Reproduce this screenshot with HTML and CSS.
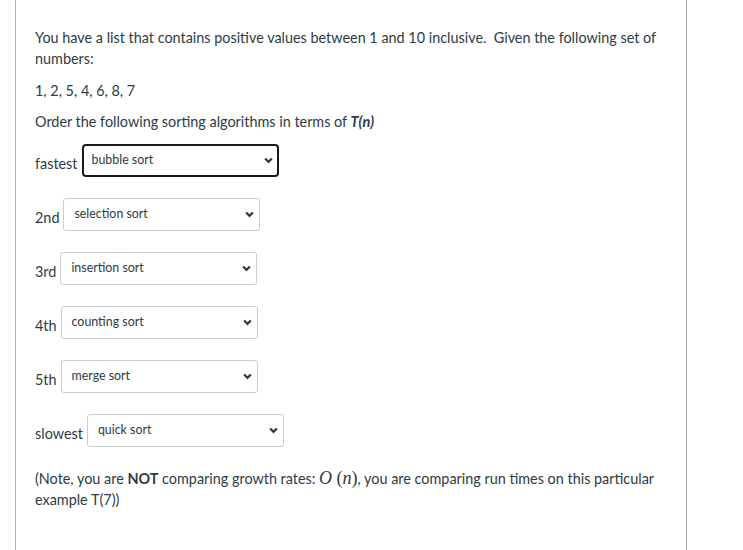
FILE: index.html
```html
<!DOCTYPE html>
<html lang="en">
<head>
  <meta charset="UTF-8">
  <title>Question - Sorting Algorithms</title>
  <link rel="stylesheet" href="styles.css">
</head>
<body>

  <div class="question">
    <p>You have a list that contains positive values between 1 and 10 inclusive.&nbsp; Given the following set of numbers:</p>
    <p>1, 2, 5, 4, 6, 8, 7</p>
    <p>Order the following sorting algorithms in terms of <strong><em>T(n)</em></strong></p>

    <div class="answers">
      <div class="answer-row">
        <span class="rank">fastest</span>
        <span class="select-wrap">
          <select class="answer focused">
            <option>bubble sort</option>
          </select>
          <svg class="chevron" viewBox="0 0 8 6"><path d="M1 1.2 L4 4.2 L7 1.2" /></svg>
        </span>
      </div>

      <div class="answer-row">
        <span class="rank">2nd</span>
        <span class="select-wrap">
          <select class="answer">
            <option>selection sort</option>
          </select>
          <svg class="chevron" viewBox="0 0 8 6"><path d="M1 1.2 L4 4.2 L7 1.2" /></svg>
        </span>
      </div>

      <div class="answer-row">
        <span class="rank">3rd</span>
        <span class="select-wrap">
          <select class="answer">
            <option>insertion sort</option>
          </select>
          <svg class="chevron" viewBox="0 0 8 6"><path d="M1 1.2 L4 4.2 L7 1.2" /></svg>
        </span>
      </div>

      <div class="answer-row">
        <span class="rank">4th</span>
        <span class="select-wrap">
          <select class="answer">
            <option>counting sort</option>
          </select>
          <svg class="chevron" viewBox="0 0 8 6"><path d="M1 1.2 L4 4.2 L7 1.2" /></svg>
        </span>
      </div>

      <div class="answer-row">
        <span class="rank">5th</span>
        <span class="select-wrap">
          <select class="answer">
            <option>merge sort</option>
          </select>
          <svg class="chevron" viewBox="0 0 8 6"><path d="M1 1.2 L4 4.2 L7 1.2" /></svg>
        </span>
      </div>

      <div class="answer-row">
        <span class="rank">slowest</span>
        <span class="select-wrap">
          <select class="answer">
            <option>quick sort</option>
          </select>
          <svg class="chevron" viewBox="0 0 8 6"><path d="M1 1.2 L4 4.2 L7 1.2" /></svg>
        </span>
      </div>
    </div>

    <p class="note">(Note, you are <strong>NOT</strong> comparing growth rates: <span class="math"><i>O</i> (<i>n</i>)</span>, you are comparing run times on this particular example T(7))</p>
  </div>

</body>
</html>
```

FILE: styles.css
```css
* {
  margin: 0;
  padding: 0;
  box-sizing: border-box;
}

body {
  background-color: #ffffff;
  font-family: Lato, "Open Sans", sans-serif;
  font-size: 14.4px;
  line-height: 21px;
  color: #2d3b45;
}

.question {
  margin-left: 15px;
  width: 672px;
  min-height: 550px;
  border-left: 1px solid #a9aeb1;
  border-right: 1px solid #a9aeb1;
  padding: 27px 20px 0 19px;
}

.question p {
  margin-bottom: 10.5px;
}

.question strong em {
  font-weight: bold;
}

.answers {
  display: flex;
  flex-direction: column;
  gap: 21px;
  padding-top: 1.5px;
  margin-bottom: 21px;
}

.answer-row {
  display: flex;
  align-items: center;
}

.rank {
  margin-right: 4px;
  padding-top: 6px;
}

.select-wrap {
  position: relative;
  display: inline-block;
}

.answer {
  appearance: none;
  -webkit-appearance: none;
  width: 197px;
  height: 33px;
  padding: 0 24px 2px 10px;
  font-family: Lato, "Open Sans", sans-serif;
  font-size: 12.4px;
  color: #2d3b45;
  background-color: #ffffff;
  border: 1px solid #c7cdd1;
  border-radius: 3px;
}

.answer.focused {
  border: 2px solid #1b1b1b;
  border-radius: 4px;
  padding-left: 8px;
}

.chevron {
  position: absolute;
  right: 6px;
  top: 13px;
  width: 9px;
  height: 7px;
  fill: none;
  stroke: #2d3b45;
  stroke-width: 2;
}

.math {
  font-family: "Liberation Serif", "DejaVu Serif", serif;
  font-size: 18px;
}

.math i {
  font-style: italic;
}
```
